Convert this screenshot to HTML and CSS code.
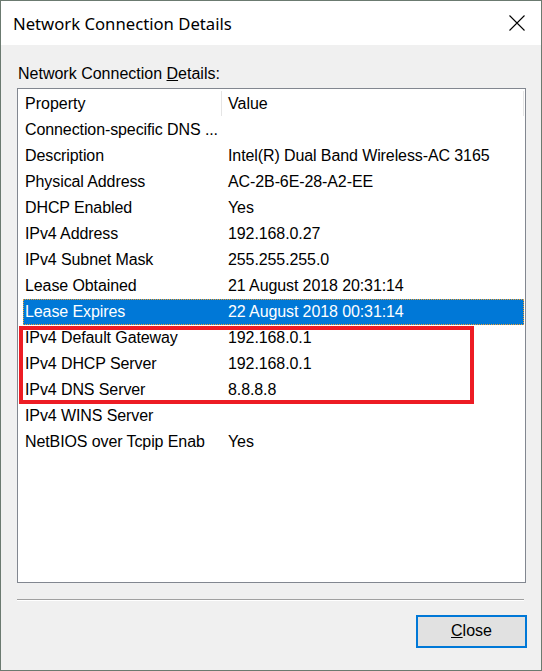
FILE: index.html
```html
<!DOCTYPE html>
<html>
<head>
<meta charset="utf-8">
<link rel="stylesheet" href="styles.css">
</head>
<body>
<div class="window">
  <div class="titlebar">
    <span class="title">Network Connection Details</span>
    <svg class="close-x" width="16" height="16" viewBox="0 0 16 16"><path d="M0.5 0.5 L15.5 15.5 M15.5 0.5 L0.5 15.5" stroke="#000" stroke-width="1.1" fill="none"/></svg>
  </div>
  <div class="content">
    <div class="label">Network Connection <u>D</u>etails:</div>
    <div class="listbox">
      <div class="header">
        <div class="hcell c1">Property</div>
        <div class="hcell c2">Value</div>
      </div>
      <div class="rows">
        <div class="row"><span class="c1">Connection-specific DNS ...</span><span class="c2"></span></div>
        <div class="row"><span class="c1">Description</span><span class="c2">Intel(R) Dual Band Wireless-AC 3165</span></div>
        <div class="row"><span class="c1">Physical Address</span><span class="c2">AC-2B-6E-28-A2-EE</span></div>
        <div class="row"><span class="c1">DHCP Enabled</span><span class="c2">Yes</span></div>
        <div class="row"><span class="c1">IPv4 Address</span><span class="c2">192.168.0.27</span></div>
        <div class="row"><span class="c1">IPv4 Subnet Mask</span><span class="c2">255.255.255.0</span></div>
        <div class="row"><span class="c1">Lease Obtained</span><span class="c2">21 August 2018 20:31:14</span></div>
        <div class="row selected"><span class="c1">Lease Expires</span><span class="c2">22 August 2018 00:31:14</span></div>
        <div class="row"><span class="c1">IPv4 Default Gateway</span><span class="c2">192.168.0.1</span></div>
        <div class="row"><span class="c1">IPv4 DHCP Server</span><span class="c2">192.168.0.1</span></div>
        <div class="row"><span class="c1">IPv4 DNS Server</span><span class="c2">8.8.8.8</span></div>
        <div class="row"><span class="c1">IPv4 WINS Server</span><span class="c2"></span></div>
        <div class="row"><span class="c1">NetBIOS over Tcpip Enab</span><span class="c2">Yes</span></div>
      </div>
      <div class="highlight-box"></div>
    </div>
    <div class="separator"></div>
    <div class="footer">
      <button class="btn"><u>C</u>lose</button>
    </div>
  </div>
</div>
</body>
</html>
```
FILE: styles.css
```css
html, body {
  margin: 0;
  padding: 0;
  background: #f0f0f0;
}
.window {
  width: 542px;
  height: 671px;
  box-sizing: border-box;
  border: 1px solid #6b7a70;
  background: #f0f0f0;
  font-family: "Liberation Sans", Arial, sans-serif;
  font-size: 16px;
  color: #000;
  display: flex;
  flex-direction: column;
}
.titlebar {
  height: 44px;
  background: #fff;
  display: flex;
  align-items: center;
  justify-content: space-between;
  padding: 0 16px 0 12px;
  flex: none;
}
.title {
  font-family: "Noto Sans", "Open Sans", sans-serif;
  font-size: 16.7px;
}
.close-x {
  display: block;
}
.content {
  flex: 1;
  padding: 0 15px 0 16px;
  display: flex;
  flex-direction: column;
}
.label {
  margin-top: 20px;
  height: 23px;
  line-height: 18px;
  padding-left: 1px;
}
.listbox {
  position: relative;
  height: 495px;
  box-sizing: border-box;
  border: 1px solid #828790;
  background: #fff;
  overflow: hidden;
}
.header {
  display: flex;
  height: 28px;
}
.hcell {
  box-sizing: border-box;
  padding-left: 6px;
  border-right: 1px solid #e5e5e5;
  margin: 2px 0 0;
  line-height: 25px;
  height: 25px;
}
.hcell.c1 {
  width: 204px;
  padding-left: 7px;
}
.hcell.c2 {
  width: 302px;
}
.rows {
  display: flex;
  flex-direction: column;
  letter-spacing: -0.1px;
}
.row {
  display: flex;
  height: 26px;
  line-height: 26px;
  margin-left: 5px;
  margin-right: 1px;
  box-sizing: border-box;
}
.row .c1 {
  width: 199px;
  padding-left: 2px;
  overflow: hidden;
  white-space: nowrap;
  flex: none;
}
.row .c2 {
  padding-left: 4px;
  white-space: nowrap;
}
.row.selected {
  background: #0078d7;
  color: #fff;
  outline: 1px dotted #f0a030;
  outline-offset: -1px;
}
.highlight-box {
  position: absolute;
  left: 1px;
  top: 237px;
  width: 455px;
  height: 78px;
  box-sizing: border-box;
  border: 4px solid #ed1c24;
}
.separator {
  margin-top: 16px;
  height: 1px;
  width: 507px;
  background: #a0a0a0;
  border-bottom: 1px solid #fff;
}
.footer {
  display: flex;
  justify-content: flex-end;
  margin-top: 14px;
}
.btn {
  width: 111px;
  height: 33px;
  box-sizing: border-box;
  border: 2px solid #0078d7;
  background: #e1e1e1;
  font-family: "Liberation Sans", Arial, sans-serif;
  font-size: 16px;
  color: #000;
  padding: 0 0 2px;
  margin-right: -1px;
}
```
